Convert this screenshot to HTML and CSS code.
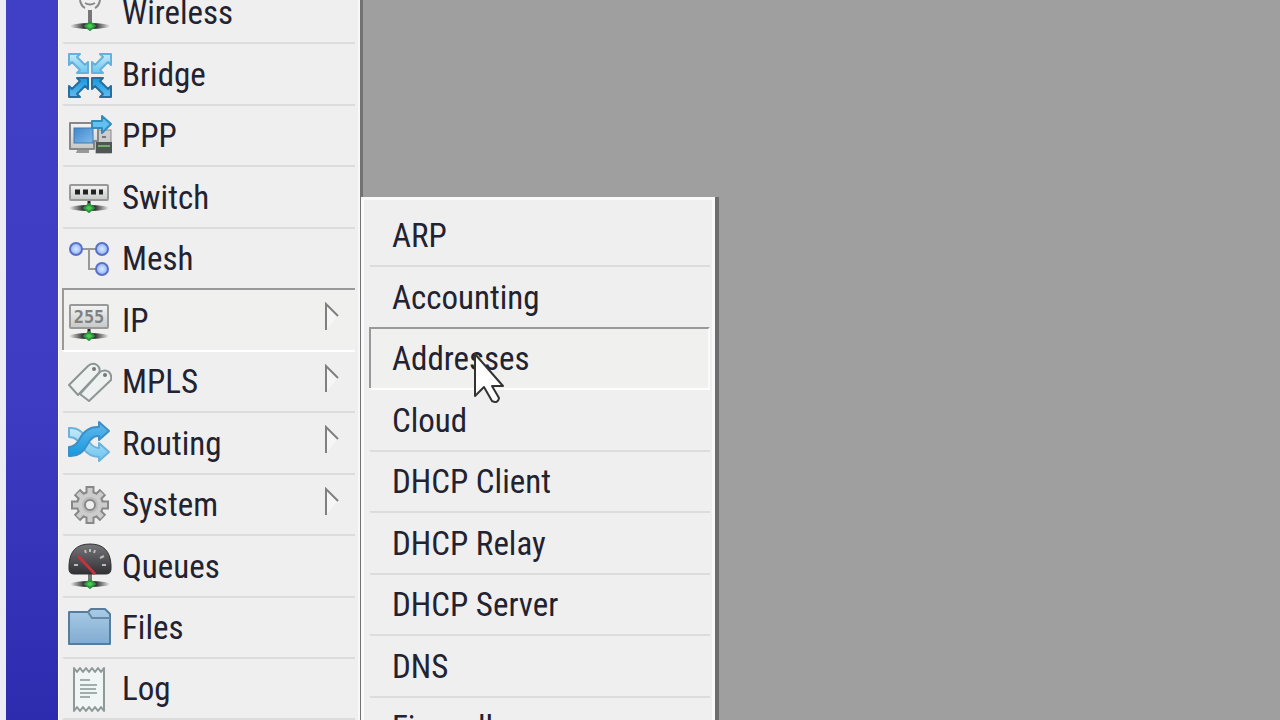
FILE: index.html
```html
<!DOCTYPE html>
<html lang="en">
<head>
  <meta charset="UTF-8" />
  <meta name="viewport" content="width=device-width, initial-scale=1.0"/>
  <title>Router Menu</title>
  <link rel="stylesheet" href="styles.css">
</head>
<body>
  <svg class="defs" aria-hidden="true">
    <defs>
      <linearGradient id="lightBlue" x1="0" y1="0" x2="0" y2="1">
        <stop offset="0" stop-color="#c4eafa"/><stop offset="1" stop-color="#6cc4f0"/>
      </linearGradient>
      <linearGradient id="deepBlue" x1="0" y1="0" x2="0" y2="1">
        <stop offset="0" stop-color="#62b9ec"/><stop offset="1" stop-color="#1799e0"/>
      </linearGradient>
      <linearGradient id="screen" x1="0" y1="0" x2="1" y2="1">
        <stop offset="0" stop-color="#3f86cc"/><stop offset="1" stop-color="#7fbcec"/>
      </linearGradient>
      <linearGradient id="metal" x1="0" y1="0" x2="0" y2="1">
        <stop offset="0" stop-color="#f4f4f4"/><stop offset="1" stop-color="#c6c8c8"/>
      </linearGradient>
      <linearGradient id="folder" x1="0" y1="0" x2="0" y2="1">
        <stop offset="0" stop-color="#a9cbe6"/><stop offset="1" stop-color="#82abd0"/>
      </linearGradient>
      <linearGradient id="gauge" x1="0" y1="0" x2="0" y2="1">
        <stop offset="0" stop-color="#77777a"/><stop offset="1" stop-color="#303036"/>
      </linearGradient>
      <linearGradient id="cable" x1="0" y1="0" x2="1" y2="0">
        <stop offset="0" stop-color="#333" stop-opacity="0"/><stop offset=".35" stop-color="#333"/>
        <stop offset=".65" stop-color="#333"/><stop offset="1" stop-color="#333" stop-opacity="0"/>
      </linearGradient>
      <radialGradient id="node">
        <stop offset="0" stop-color="#d8eaff"/><stop offset="1" stop-color="#8fb2f6"/>
      </radialGradient>
      <g id="plug">
        <ellipse cx="21" cy="0" rx="20" ry="3" fill="url(#cable)"/>
        <path d="M21-4l5 4-5 4-5-4z" fill="#45c953" stroke="#2f9440" stroke-width="2" stroke-linejoin="round"/>
      </g>
      <path id="arrowOut" d="M0 0h11l-3 3 8 8 3-3v11H8l3-3-8-8-3 3z" stroke-width="2" stroke-linejoin="round"/>
      <g id="more">
        <path d="M4 27L14 15V12L4 2z" fill="#f6f6f6"/>
        <path d="M3 28V2l12 12" fill="none" stroke="#808080" stroke-width="2"/>
      </g>
    </defs>
  </svg>

  <div class="frame"></div>
  <div class="brand"></div>

  <nav class="menu" aria-label="Main menu">
    <ul class="menu-list">
      <li>
        <button type="button" class="item">
          <svg class="icon" viewBox="0 0 44 48">
            <path d="M12 11q1 6 5 8M32 11q-1 6-5 8M17 14q5 3 10 0" fill="none" stroke="#888" stroke-width="2"/>
            <path d="M22 21v14" stroke="#777" stroke-width="4"/>
            <use href="#plug" x="1" y="37"/>
          </svg>
          Wireless
        </button>
      </li>
      <li>
        <button type="button" class="item">
          <svg class="icon" viewBox="0 0 44 48">
            <g fill="url(#lightBlue)" stroke="#62b2dc">
              <use href="#arrowOut" transform="translate(1 4)"/>
              <use href="#arrowOut" transform="translate(43 4) scale(-1 1)"/>
            </g>
            <g fill="url(#deepBlue)" stroke="#246f9f">
              <use href="#arrowOut" transform="translate(1 47) scale(1 -1)"/>
              <use href="#arrowOut" transform="translate(43 47) scale(-1 -1)"/>
            </g>
          </svg>
          Bridge
        </button>
      </li>
      <li>
        <button type="button" class="item">
          <svg class="icon" viewBox="0 0 44 48">
            <rect x="28" y="18" width="15" height="23" fill="#ccc" stroke="#888" stroke-width="1"/>
            <path d="M34 25h4" stroke="#777" stroke-width="2"/>
            <rect x="28" y="30" width="16" height="11" fill="#4f5752"/>
            <path d="M30 34h12" stroke="#6faf68" stroke-width="2"/>
            <path d="M10 36h11v5H8z" fill="#999"/>
            <path d="M2 11h28v18h-4v8H2z" fill="url(#metal)" stroke="#888" stroke-width="2" stroke-linejoin="round"/>
            <rect x="6" y="16" width="19" height="15" fill="url(#screen)" stroke="#4679a8" stroke-width="1"/>
            <path d="M24 9h10V4l9 8-9 9v-5H24z" fill="#63c1f1" stroke="#328dbd" stroke-width="2" stroke-linejoin="round"/>
          </svg>
          PPP
        </button>
      </li>
      <li>
        <button type="button" class="item">
          <svg class="icon" viewBox="0 0 44 48">
            <path d="M21 27v6" stroke="#222" stroke-width="3"/>
            <rect x="2" y="12" width="38" height="15" rx="1" fill="url(#metal)" stroke="#999" stroke-width="2"/>
            <path d="M7 19h28" stroke="#222" stroke-width="5" stroke-dasharray="5 3"/>
            <use href="#plug" y="35"/>
          </svg>
          Switch
        </button>
      </li>
      <li>
        <button type="button" class="item">
          <svg class="icon" viewBox="0 0 44 48">
            <path d="M14 14h14M21 14v20h7" fill="none" stroke="#999" stroke-width="2"/>
            <g fill="url(#node)" stroke="#5a6fc9" stroke-width="2">
              <circle cx="8" cy="14" r="6"/>
              <circle cx="34" cy="14" r="6"/>
              <circle cx="34" cy="34" r="6"/>
            </g>
          </svg>
          Mesh
        </button>
      </li>
      <li class="parent">
        <button type="button" class="item active" aria-haspopup="true" aria-expanded="true">
          <svg class="icon" viewBox="0 0 44 48">
            <path d="M21 32v6" stroke="#222" stroke-width="3"/>
            <rect x="2" y="9" width="38" height="23" rx="1" fill="url(#metal)" stroke="#999" stroke-width="2"/>
            <text class="digits" x="21" y="27" text-anchor="middle">255</text>
            <use href="#plug" y="40"/>
          </svg>
          IP
          <svg class="more" viewBox="0 0 18 30"><use href="#more"/></svg>
        </button>

        <ul class="submenu">
          <li><button type="button" class="item">ARP</button></li>
          <li><button type="button" class="item">Accounting</button></li>
          <li class="parent">
            <button type="button" class="item active">Addresses</button>
            <svg class="cursor" viewBox="0 0 32 54" aria-hidden="true">
              <path d="M2 2v42l9-9 8 14q6 3 7-3l-7-12h11z" fill="#fff" stroke="#333" stroke-width="2" stroke-linejoin="round"/>
            </svg>
          </li>
          <li><button type="button" class="item">Cloud</button></li>
          <li><button type="button" class="item">DHCP Client</button></li>
          <li><button type="button" class="item">DHCP Relay</button></li>
          <li><button type="button" class="item">DHCP Server</button></li>
          <li><button type="button" class="item">DNS</button></li>
          <li><button type="button" class="item">Firewall</button></li>
        </ul>
      </li>
      <li>
        <button type="button" class="item" aria-haspopup="true">
          <svg class="icon" viewBox="0 0 44 48">
            <g fill="#edf2f1" stroke="#8d9695" stroke-width="2" stroke-linejoin="round">
              <path d="M1 27L20 8q4-4 9-1 4 3 2 8L10 37z"/>
              <path d="M12 36l20-22q5-3 9 0 3 3 2 8L21 43z"/>
            </g>
            <circle cx="26" cy="11" r="2" fill="#777"/>
            <circle cx="37" cy="17" r="2" fill="#777"/>
          </svg>
          MPLS
          <svg class="more" viewBox="0 0 18 30"><use href="#more"/></svg>
        </button>
      </li>
      <li>
        <button type="button" class="item" aria-haspopup="true">
          <svg class="icon" viewBox="0 0 44 48">
            <g stroke-width="2" stroke-linejoin="round">
              <path d="M1 9q10-1 15 7l6 8q4 5 9 5v-5l10 9-10 9v-4q-10 0-16-9l-6-8q-3-3-8-3z" fill="url(#lightBlue)" stroke="#6db2dc"/>
              <path d="M1 37V28q6 0 10-7Q18 7 31 8V3l10 9-10 9v-4q-7-1-12 9Q13 38 1 37z" fill="url(#deepBlue)" stroke="#3f8fc6"/>
            </g>
          </svg>
          Routing
          <svg class="more" viewBox="0 0 18 30"><use href="#more"/></svg>
        </button>
      </li>
      <li>
        <button type="button" class="item" aria-haspopup="true">
          <svg class="icon" viewBox="0 0 44 48">
            <g stroke="#888" stroke-width="9">
              <path d="M22 5v38M3 24h38M9 11l26 26M35 11L9 37"/>
            </g>
            <circle cx="22" cy="24" r="14" fill="#888"/>
            <g stroke="#ccc" stroke-width="5">
              <path d="M22 7v34M5 24h34M10 12l24 24M34 12L10 36"/>
            </g>
            <circle cx="22" cy="24" r="12" fill="#ccc"/>
            <circle cx="22" cy="24" r="8" fill="#bbb"/>
            <circle cx="22" cy="24" r="5" fill="#efefef" stroke="#888" stroke-width="2"/>
          </svg>
          System
          <svg class="more" viewBox="0 0 18 30"><use href="#more"/></svg>
        </button>
      </li>
      <li>
        <button type="button" class="item">
          <svg class="icon" viewBox="0 0 44 48">
            <path d="M22 32v8" stroke="#777" stroke-width="4"/>
            <path d="M1 23Q2 2 22 2t21 21v4q0 5-5 5H6q-5 0-5-5z" fill="url(#gauge)" stroke="#333" stroke-width="1"/>
            <path d="M6 23h4M34 23h4M17 8l1 3M22 7v3M27 8l-1 3M36 14l-4 2" stroke="#bbb" stroke-width="2"/>
            <path d="M10 14l17 18" stroke="#c4343f" stroke-width="3"/>
            <use href="#plug" x="1" y="42"/>
          </svg>
          Queues
        </button>
      </li>
      <li>
        <button type="button" class="item">
          <svg class="icon" viewBox="0 0 44 48">
            <path d="M1 8h19l3-3h14l5 5v30H1z" fill="url(#folder)" stroke="#587c9c" stroke-width="2" stroke-linejoin="round"/>
            <path d="M20 8l4 6h18" fill="none" stroke="#6689a8" stroke-width="2"/>
          </svg>
          Files
        </button>
      </li>
      <li>
        <button type="button" class="item">
          <svg class="icon" viewBox="0 0 44 48">
            <path d="M6 3l3 4 3-4 3 4 3-4 3 4 3-4 3 4 3-4 3 4 3-4v43l-3-4-3 4-3-4-3 4-3-4-3 4-3-4-3 4-3-4-3 4z" fill="#eff6f5" stroke="#8f9998" stroke-width="2" stroke-linejoin="round"/>
            <path d="M12 15h10M12 20h17M12 24h16M12 28h17M12 32h10" stroke="#a3adac" stroke-width="2"/>
          </svg>
          Log
        </button>
      </li>
    </ul>
  </nav>

  <main class="workspace"></main>
</body>
</html>
```
FILE: styles.css
```css
* {
  box-sizing: border-box;
}

body {
  margin: 0;
  height: 100vh;
  display: flex;
  overflow: hidden;
  background: #efefef;
  color: #222230;
  font-family: "Roboto Condensed", "Liberation Sans Narrow", "Arial Narrow", "Liberation Sans", sans-serif;
  font-size: 33px;
}

.defs {
  position: absolute;
  width: 0;
  height: 0;
}

.frame {
  width: 6px;
  background: #ececf4;
}

.brand {
  width: 52px;
  background: linear-gradient(#4040c6 0%, #3e3cc2 55%, #2d2bae 100%);
}

.menu {
  width: 305px;
  padding: 0 5px 0 3px;
  background: #efefef;
  border-left: 1px solid #fff;
  border-right: 3px solid #727272;
  box-shadow: inset -2px 0 #f8f8f8;
}

.menu-list,
.submenu {
  list-style: none;
  margin: 0;
  padding: 0;
}

/* the list is scrolled, its first row is cut by the window's top */
.menu-list {
  margin-top: -19px;
}

.item {
  display: flex;
  align-items: center;
  gap: 10px;
  width: 100%;
  height: 61px;
  padding: 0 14px 0 4px;
  border: 0 solid transparent;
  border-top: 2px solid #dcdcdc;
  border-left-width: 2px;
  background: none;
  color: inherit;
  font: inherit;
  text-align: left;
  white-space: nowrap;
}

li:nth-child(even) > .item {
  height: 62px;
}

.menu-list > li:last-child > .item {
  height: 63px;
  border-bottom: 2px solid #dcdcdc;
}

.item.active {
  border-top-color: #999;
  border-left-color: #999;
  background: #f0f0ef;
}

.parent {
  position: relative;
}

li:has(> .active) + li > .item {
  border-top-color: #fff;
}

.icon {
  flex: none;
  width: 44px;
  height: 48px;
}

.digits {
  font-family: "DejaVu Sans Mono", monospace;
  font-size: 17px;
  font-weight: bold;
  fill: #808080;
}

.more {
  width: 18px;
  height: 30px;
  margin-left: auto;
  margin-bottom: 6px;
}

/* fly-out over the workspace */
.submenu {
  position: absolute;
  top: -91px;
  left: 299px;
  width: 354px;
  padding: 4px 5px 0 5px;
  background: #efefef;
  border: 3px solid #fafafa;
  border-right: 0;
  box-shadow: inset -3px 0 #fafafa, 4px 0 #6e6e6e;
}

.submenu .item {
  padding-left: 21px;
}

.submenu > li:first-child > .item {
  border-top-color: transparent;
}

.submenu .active {
  border-right: 2px solid #fafafa;
}

.cursor {
  position: absolute;
  left: 104px;
  top: 25px;
  width: 32px;
  height: 54px;
  pointer-events: none;
  z-index: 1;
}

.workspace {
  flex: 1;
  background: #9f9f9f;
}
```
